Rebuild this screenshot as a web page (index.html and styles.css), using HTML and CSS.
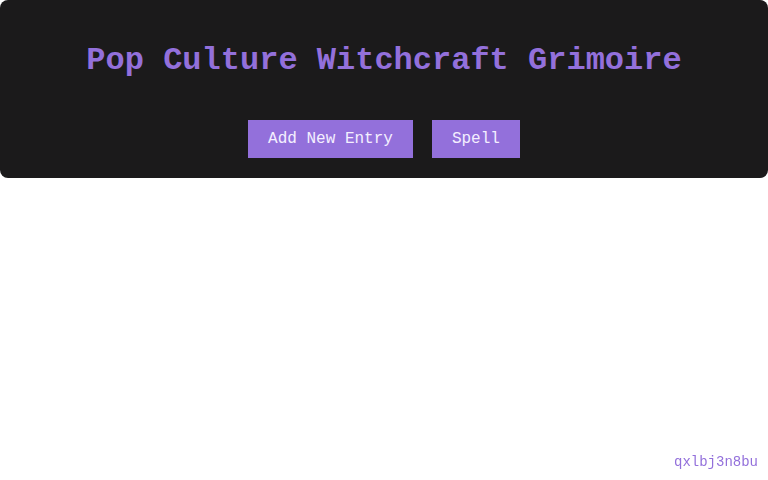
FILE: index.html
```html
<!DOCTYPE html>
<html>
<head>
<meta charset="utf-8">
<link rel="stylesheet" href="styles.css">
</head>
<body>
<header class="hero">
  <h1 class="title">Pop Culture Witchcraft Grimoire</h1>
  <div class="actions">
    <button class="btn">Add New Entry</button>
    <button class="btn">Spell</button>
  </div>
</header>
<div class="tag">qxlbj3n8bu</div>
</body>
</html>
```
FILE: styles.css
```css
html, body {
  margin: 0;
  padding: 0;
  background: #ffffff;
  font-family: "Liberation Mono", "Courier New", monospace;
}
.hero {
  background: #1b1a1b;
  border-radius: 8px;
  padding: 20px;
  text-align: center;
}
.title {
  margin: 22px 0 0;
  font-size: 32px;
  line-height: 37px;
  font-weight: bold;
  color: #9370db;
}
.actions {
  display: flex;
  justify-content: center;
  gap: 19px;
  margin-top: 41px;
}
.btn {
  background: #9370db;
  color: #f4efff;
  border: none;
  padding: 10px 20px;
  font-family: "Liberation Mono", "Courier New", monospace;
  font-size: 16px;
  line-height: 18px;
  cursor: pointer;
}
.tag {
  position: fixed;
  right: 10px;
  bottom: 10px;
  font-size: 14px;
  line-height: 16px;
  color: #9370db;
}
```
